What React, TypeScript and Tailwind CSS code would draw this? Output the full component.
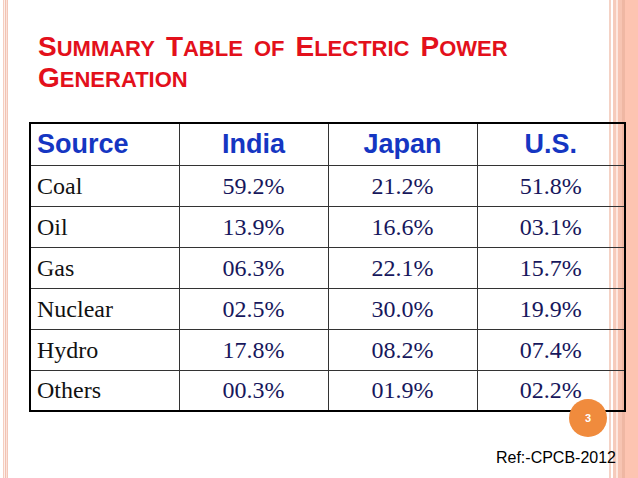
const rows = [
  { source: "Coal", india: "59.2%", japan: "21.2%", us: "51.8%" },
  { source: "Oil", india: "13.9%", japan: "16.6%", us: "03.1%" },
  { source: "Gas", india: "06.3%", japan: "22.1%", us: "15.7%" },
  { source: "Nuclear", india: "02.5%", japan: "30.0%", us: "19.9%" },
  { source: "Hydro", india: "17.8%", japan: "08.2%", us: "07.4%" },
  { source: "Others", india: "00.3%", japan: "01.9%", us: "02.2%" },
]

// small caps by hand: first letter big, rest smaller
function Caps({ word, small }: { word: string; small?: boolean }) {
  if (small) return <span className="text-[22px]">{word}</span>
  return (
    <span>
      <span className="text-[28px]">{word[0]}</span>
      <span className="text-[22px]">{word.slice(1)}</span>
    </span>
  )
}

export default function App() {
  return (
    <div className="relative w-[638px] h-[478px] overflow-hidden bg-[linear-gradient(to_right,#fff_3px,#f5cdbf_3px,#f5cdbf_4px,#fdf0eb_4px,#fdf0eb_5px,#f2c2b3_5px,#f2c2b3_6px,#fbe3da_6px,#fbe3da_7px,#f3c7b9_7px,#f3c7b9_8px,#fff_8px,#fff_609px,#f4d2c5_609px,#f4d2c5_611px,#fff_611px,#fff_613px,#f6cbbb_613px,#f6cbbb_616px,#fde7df_616px,#fde7df_618px,#f7c4b2_618px,#f7c4b2_622px,#efb7a3_622px,#efb7a3_625px,#fdc4b1_625px)]">
      <div className="pt-[31px] pl-[38px] font-['Liberation_Sans',Arial,sans-serif] font-bold text-[22px] text-[#e3101b] leading-[32px]">
        <div className="flex h-[31px] items-baseline gap-x-[11px]">
          <Caps word="SUMMARY" />
          <Caps word="TABLE" />
          <Caps word="OF" small />
          <Caps word="ELECTRIC" />
          <Caps word="POWER" />
        </div>
        <div className="flex h-[31px] items-baseline">
          <Caps word="GENERATION" />
        </div>
      </div>

      <table className="mt-[29px] ml-[29px] w-[595px] table-fixed border-collapse border-2 border-black">
        <colgroup>
          <col className="w-[149px]" />
          <col className="w-[149px]" />
          <col className="w-[149px]" />
          <col className="w-[148px]" />
        </colgroup>
        <thead>
          <tr className="h-[41px] font-['Liberation_Sans',Arial,sans-serif] font-bold text-[27px] text-[#1536c2]">
            <th className="border border-[#333] px-[6px] text-left font-bold">Source</th>
            <th className="border border-[#333] text-center font-bold">India</th>
            <th className="border border-[#333] text-center font-bold">Japan</th>
            <th className="border border-[#333] text-center font-bold">U.S.</th>
          </tr>
        </thead>
        <tbody className="font-['Liberation_Serif','Times_New_Roman',serif] text-[24px]">
          {rows.map((r) => (
            <tr key={r.source} className="h-[41px]">
              <td className="border border-[#333] px-[6px] text-[#111]">{r.source}</td>
              <td className="border border-[#333] text-center text-[#17175c]">{r.india}</td>
              <td className="border border-[#333] text-center text-[#17175c]">{r.japan}</td>
              <td className="border border-[#333] text-center text-[#17175c]">{r.us}</td>
            </tr>
          ))}
        </tbody>
      </table>

      {/* page number badge */}
      <div className="absolute left-[569px] top-[399px] flex h-[38px] w-[38px] items-center justify-center rounded-full bg-[#f08b3d] font-['Liberation_Sans',Arial,sans-serif] text-[11px] font-bold text-white">
        3
      </div>

      <div className="mt-[34px] flex justify-end pr-[22px] font-['Liberation_Sans',Arial,sans-serif] text-[16px] leading-[24px] text-black">
        Ref:-CPCB-2012
      </div>
    </div>
  )
}
